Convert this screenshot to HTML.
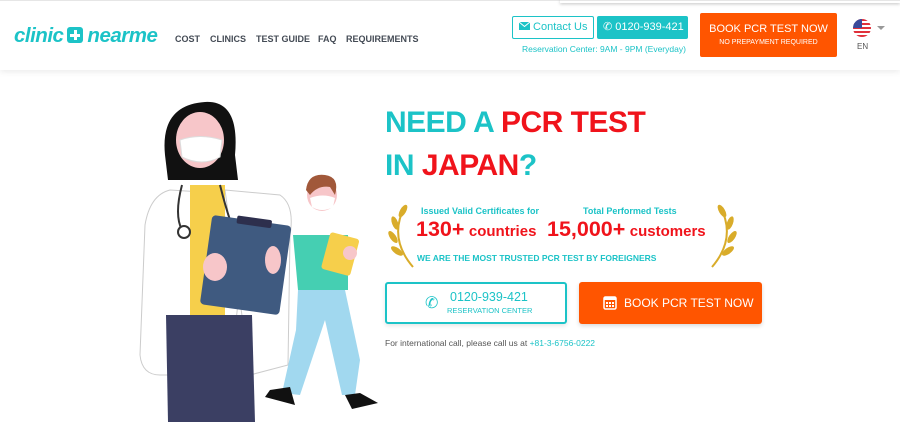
<!DOCTYPE html>
<html><head><meta charset="utf-8"><style>
*{margin:0;padding:0;box-sizing:border-box}
body{width:900px;height:422px;overflow:hidden;background:#fff;font-family:"Liberation Sans",sans-serif;position:relative}
.hdr{position:absolute;left:0;top:0;width:900px;height:70px;background:#fff;box-shadow:0 2px 6px rgba(0,0,0,.08);border-top:1px solid #e6e6e6}
.abs{position:absolute;white-space:nowrap}
.logo{left:14px;top:24px;font-size:20.5px;font-weight:bold;font-style:italic;color:#1cc3c7;letter-spacing:-0.5px}
.nav{top:34px;font-size:9px;font-weight:bold;color:#444b55}
.teal{color:#1cc3c7}
</style></head><body>
<div class="hdr"></div>
<div class="abs" style="left:560px;top:0;width:340px;height:3px;box-shadow:0 1px 3px rgba(0,0,0,.25)"></div>
<div class="abs logo">clinic<span style="display:inline-block;width:16px;height:16px;background:#1cc3c7;border-radius:3px;margin:0 4px;vertical-align:-1px;position:relative"><span style="position:absolute;left:6.5px;top:3px;width:3px;height:10px;background:#fff"></span><span style="position:absolute;left:3px;top:6.5px;width:10px;height:3px;background:#fff"></span></span>nearme</div>
<div class="abs nav" style="left:175px">COST</div>
<div class="abs nav" style="left:210px">CLINICS</div>
<div class="abs nav" style="left:256px">TEST GUIDE</div>
<div class="abs nav" style="left:318px">FAQ</div>
<div class="abs nav" style="left:346px">REQUIREMENTS</div>

<div class="abs" style="left:512px;top:16px;width:82px;height:23px;border:1.5px solid #1cc3c7;border-radius:2px;color:#1cc3c7;font-size:11px;line-height:20px;padding-left:6px"><svg width="11" height="8" style="vertical-align:0px"><rect x="0" y="0" width="11" height="8" fill="#1cc3c7"/><path d="M0 0L5.5 4.5L11 0" stroke="#fff" fill="none"/></svg> Contact Us</div>
<div class="abs" style="left:597px;top:16px;width:91px;height:23px;background:#1cc3c7;border-radius:2px;color:#fff;font-size:11px;line-height:23px;padding-left:6px">&#9990; 0120-939-421</div>
<div class="abs teal" style="left:522px;top:44px;font-size:8.5px">Reservation Center: 9AM - 9PM (Everyday)</div>
<div class="abs" style="left:700px;top:13px;width:137px;height:44px;background:#ff5500;border-radius:2px;color:#fff;text-align:center">
<div style="font-size:11px;margin-top:10px">BOOK PCR TEST NOW</div><div style="font-size:7px;margin-top:4px">NO PREPAYMENT REQUIRED</div></div>
<svg class="abs" style="left:852px;top:18px" width="35" height="22"><defs><clipPath id="c"><circle cx="10" cy="10" r="9"/></clipPath></defs><g clip-path="url(#c)"><rect width="20" height="20" fill="#fff"/><g fill="#e0303a"><rect y="1" width="20" height="2"/><rect y="5" width="20" height="2"/><rect y="9" width="20" height="2"/><rect y="13" width="20" height="2"/><rect y="17" width="20" height="2"/></g><rect width="10" height="10" fill="#3a4a9a"/></g><path d="M25 8h8l-4 4z" fill="#999"/></svg>
<div class="abs" style="left:857px;top:42px;font-size:8px;color:#555">EN</div>

<svg class="abs" style="left:130px;top:95px" width="260" height="327">
<path d="M40 95 Q20 100 15 130 L10 260 Q12 280 30 280 L100 280 L120 100 Z" fill="#fff" stroke="#ccc"/>
<path d="M95 95 L150 100 Q165 110 160 140 L158 270 L120 280 Z" fill="#fff" stroke="#ccc"/>
<path d="M60 90 L95 90 L95 225 L60 225 Z" fill="#f6cf4b"/>
<path d="M36 220 L122 220 L125 327 L38 327 Z" fill="#3b3f63"/>
<path d="M35 60 Q30 10 75 7 Q110 5 105 60 L108 85 L38 85 Z" fill="#111"/>
<ellipse cx="70" cy="45" rx="24" ry="28" fill="#f7c6c9"/>
<path d="M50 45 Q70 38 92 45 L90 62 Q72 72 52 62Z" fill="#fff" stroke="#ddd"/>
<path d="M52 90 Q44 120 52 135" stroke="#333" stroke-width="2" fill="none"/><circle cx="54" cy="137" r="6" fill="#fff" stroke="#333" stroke-width="2"/>
<path d="M90 90 Q95 110 100 125" stroke="#333" stroke-width="2" fill="none"/>
<g transform="rotate(8 115 175)"><rect x="75" y="125" width="80" height="90" rx="4" fill="#3f5a80"/><rect x="100" y="122" width="35" height="8" rx="2" fill="#2d2f4d"/></g>
<ellipse cx="85" cy="172" rx="12" ry="14" fill="#f7c6c9"/><ellipse cx="143" cy="165" rx="8" ry="14" fill="#f7c6c9"/>
<path d="M163 140 L218 140 L218 195 L168 195 Z" fill="#45cfb2"/>
<path d="M168 195 L215 195 L230 265 L225 300 L212 300 L195 225 L170 300 L152 298 L166 235 Z" fill="#a1d8ef"/>
<path d="M140 295 L160 292 L165 310 L135 302 Z" fill="#111"/><path d="M215 300 L230 298 L248 308 L222 314 Z" fill="#111"/>
<ellipse cx="192" cy="100" rx="15" ry="16" fill="#f7c6c9"/><path d="M176 95 Q178 78 195 80 Q210 82 205 100 L200 92 Q188 90 180 100Z" fill="#a1583a"/>
<path d="M180 103 Q193 98 205 103 L203 112 Q192 118 182 112Z" fill="#fff"/>
<g transform="rotate(15 210 160)"><rect x="195" y="140" width="30" height="38" rx="3" fill="#f6cf4b"/></g>
<circle cx="220" cy="158" r="7" fill="#f7c6c9"/>
</svg>

<div class="abs" style="left:385px;top:106px;font-size:30px;font-weight:bold;color:#1cc3c7;letter-spacing:-0.5px">NEED A <span style="color:#f0131b">PCR TEST</span></div>
<div class="abs" style="left:385px;top:149px;font-size:30px;font-weight:bold;color:#1cc3c7;letter-spacing:-0.5px">IN <span style="color:#f0131b">JAPAN</span>?</div>

<svg class="abs" style="left:383px;top:203px" width="32" height="65"><g fill="#d9ac2a"><ellipse cx="20" cy="8" rx="3" ry="7" transform="rotate(30 20 8)"/><ellipse cx="12" cy="20" rx="3" ry="7" transform="rotate(-20 12 20)"/><ellipse cx="10" cy="34" rx="3" ry="7" transform="rotate(-35 10 34)"/><ellipse cx="14" cy="48" rx="3" ry="7" transform="rotate(-55 14 48)"/></g><path d="M22 3 Q5 35 30 64" stroke="#d9ac2a" stroke-width="2" fill="none"/></svg>
<svg class="abs" style="left:710px;top:203px" width="32" height="65"><g transform="translate(32 0) scale(-1 1)"><g fill="#d9ac2a"><ellipse cx="20" cy="8" rx="3" ry="7" transform="rotate(30 20 8)"/><ellipse cx="12" cy="20" rx="3" ry="7" transform="rotate(-20 12 20)"/><ellipse cx="10" cy="34" rx="3" ry="7" transform="rotate(-35 10 34)"/><ellipse cx="14" cy="48" rx="3" ry="7" transform="rotate(-55 14 48)"/></g><path d="M22 3 Q5 35 30 64" stroke="#d9ac2a" stroke-width="2" fill="none"/></g></svg>

<div class="abs teal" style="left:421px;top:206px;font-size:9px;font-weight:bold">Issued Valid Certificates for</div>
<div class="abs teal" style="left:583px;top:206px;font-size:9px;font-weight:bold">Total Performed Tests</div>
<div class="abs" style="left:416px;top:217px;color:#f0131b;font-weight:bold"><span style="font-size:21.5px">130+</span> <span style="font-size:15px">countries</span></div>
<div class="abs" style="left:547px;top:217px;color:#f0131b;font-weight:bold"><span style="font-size:21.5px">15,000+</span> <span style="font-size:15px">customers</span></div>
<div class="abs teal" style="left:417px;top:253px;font-size:8.5px;font-weight:bold">WE ARE THE MOST TRUSTED PCR TEST BY FOREIGNERS</div>

<div class="abs" style="left:385px;top:282px;width:182px;height:42px;border:2px solid #1cc3c7;border-radius:3px;box-shadow:0 2px 4px rgba(0,0,0,.1)"></div>
<div class="abs teal" style="left:425px;top:293px;font-size:16px">&#9990;</div>
<div class="abs teal" style="left:450px;top:290px;font-size:12.5px">0120-939-421</div>
<div class="abs teal" style="left:447px;top:306px;font-size:7.5px">RESERVATION CENTER</div>
<div class="abs" style="left:579px;top:282px;width:183px;height:42px;background:#ff5500;border-radius:3px;box-shadow:0 2px 4px rgba(0,0,0,.15);color:#fff;font-size:12px;line-height:42px;padding-left:45px">BOOK PCR TEST NOW</div>
<svg class="abs" style="left:603px;top:295px" width="14" height="15"><rect x="1" y="2" width="12" height="12" rx="1.5" fill="none" stroke="#fff" stroke-width="1.5"/><rect x="1" y="2" width="12" height="3" fill="#fff"/><g fill="#fff"><rect x="3" y="7" width="2" height="2"/><rect x="6" y="7" width="2" height="2"/><rect x="9" y="7" width="2" height="2"/><rect x="3" y="10" width="2" height="2"/><rect x="6" y="10" width="2" height="2"/><rect x="9" y="10" width="2" height="2"/></g></svg>
<div class="abs" style="left:385px;top:338px;font-size:8.5px;color:#555">For international call, please call us at <span class="teal">+81-3-6756-0222</span></div>
</body></html>
